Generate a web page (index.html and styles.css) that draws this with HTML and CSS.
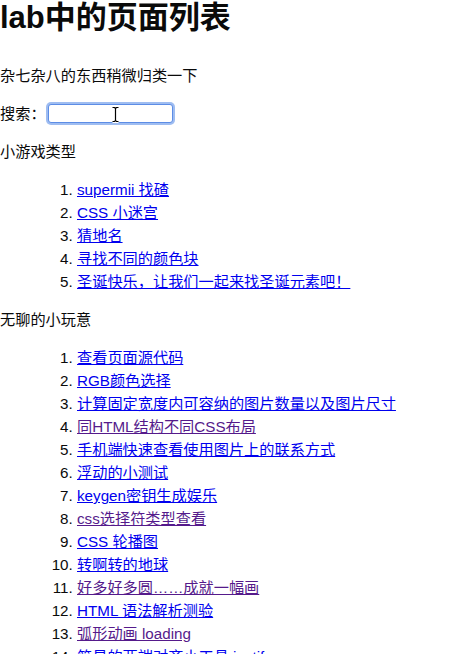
FILE: index.html
```html
<!DOCTYPE html>
<html lang="zh-CN">
<head>
<meta charset="utf-8">
<title>lab中的页面列表</title>
<link rel="stylesheet" href="styles.css">
</head>
<body>
<h1 class="title">lab中的页面列表</h1>
<p class="text">杂七杂八的东西稍微归类一下</p>
<p class="text search">搜索：<span class="field"><input class="search-input" type="text"><svg class="ibeam" width="9" height="17" viewBox="0 0 9 17"><path d="M1.5 1.5h2l1 1 1-1h2M4.5 2.5v12M1.5 15.5h2l1-1 1 1h2" fill="none" stroke="#fff" stroke-width="3"/><path d="M1.5 1.5h2l1 1 1-1h2M4.5 2.5v12M1.5 15.5h2l1-1 1 1h2" fill="none" stroke="#000" stroke-width="1.2"/></svg></span></p>
<p class="text">小游戏类型</p>
<ol class="list">
  <li><a href="#" class="link">supermii 找碴</a></li>
  <li><a href="#" class="link">CSS 小迷宫</a></li>
  <li><a href="#" class="link">猜地名</a></li>
  <li><a href="#" class="link">寻找不同的颜色块</a></li>
  <li><a href="#" class="link">圣诞快乐，让我们一起来找圣诞元素吧！</a></li>
</ol>
<p class="text">无聊的小玩意</p>
<ol class="list">
  <li><a href="#" class="link">查看页面源代码</a></li>
  <li><a href="#" class="link">RGB颜色选择</a></li>
  <li><a href="#" class="link">计算固定宽度内可容纳的图片数量以及图片尺寸</a></li>
  <li><a href="#" class="link visited">同HTML结构不同CSS布局</a></li>
  <li><a href="#" class="link">手机端快速查看使用图片上的联系方式</a></li>
  <li><a href="#" class="link">浮动的小测试</a></li>
  <li><a href="#" class="link">keygen密钥生成娱乐</a></li>
  <li><a href="#" class="link visited">css选择符类型查看</a></li>
  <li><a href="#" class="link">CSS 轮播图</a></li>
  <li><a href="#" class="link">转啊转的地球</a></li>
  <li><a href="#" class="link visited">好多好多圆……成就一幅画</a></li>
  <li><a href="#" class="link">HTML 语法解析测验</a></li>
  <li><a href="#" class="link visited">弧形动画 loading</a></li>
  <li><a href="#" class="link">简易的两端对齐小工具 justify</a></li>
</ol>
</body>
</html>
```
FILE: styles.css
```css
html, body {
  background: #fff;
}
body {
  margin: 0;
  color: #0a0a0a;
  font-family: "Liberation Sans", "Noto Sans CJK SC", sans-serif;
  font-size: 15.2px;
  line-height: 23px;
}
.title {
  margin: 0 0 28px;
  font-size: 31px;
  line-height: 36px;
  font-weight: bold;
  color: #0a0a0a;
}
.text {
  margin: 15px 0;
}
.search {
  display: flex;
  align-items: center;
}
.field {
  position: relative;
  display: inline-block;
  margin-left: 2px;
  height: 19px;
}
.search-input {
  box-sizing: border-box;
  width: 125px;
  height: 19px;
  margin: 0;
  padding: 0 3px;
  border: 1px solid #5d8de6;
  border-radius: 3px;
  background: #fff;
  box-shadow: 0 0 0 2px #9fbdf1;
  outline: none;
  font: inherit;
  display: block;
}
.ibeam {
  position: absolute;
  left: 63px;
  top: 2px;
}
.list {
  margin: 15px 0;
  padding-left: 77px;
}
.link {
  color: #0000ee;
  text-decoration: underline;
}
.link.visited {
  color: #551a8b;
}
```
